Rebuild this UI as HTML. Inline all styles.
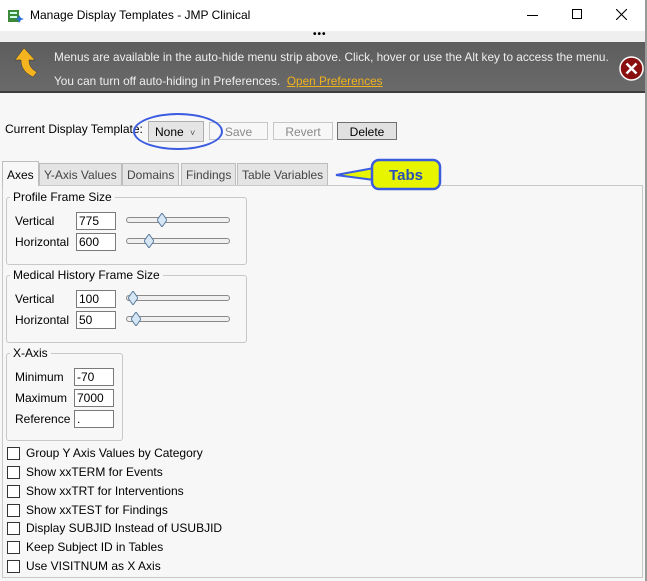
<!DOCTYPE html>
<html><head><style>
*{margin:0;padding:0;box-sizing:border-box}
body{width:647px;height:581px;overflow:hidden;background:#f7f7f7;font-family:"Liberation Sans",sans-serif;font-size:12px;color:#000;position:relative}
.a{position:absolute;white-space:nowrap}
.inp{position:absolute;background:#fff;border:1px solid #7a7a7a;height:18px;font-size:12px;padding:1px 2px}
fieldset{position:absolute;border:1px solid #c8c8c8;border-radius:3px}
.lg{position:absolute;background:#f7f7f7;padding:0 3px;font-size:12px}
.sl{position:absolute;height:6px;border:1px solid #8a8a8a;border-radius:3px;background:#f0f0f0;width:104px}
.th{position:absolute;width:10px;height:14px;top:-5px}
.cb{position:absolute;left:7px;width:13px;height:13px;border:1px solid #333;background:#fff}
.cl{position:absolute;left:26px}
.tab{position:absolute;top:163px;height:22px;border:1px solid #bdbdbd;border-bottom:none;background:#e4e4e4;color:#444;padding:4px 4px 0;font-size:12px}
.btn{position:absolute;top:122px;height:18px;border:1px solid #c6c6c6;background:#f7f7f7;color:#888;text-align:center;padding-top:2px}
</style></head><body>
<div class="a" style="left:0;top:0;width:647px;height:31px;background:#fff"></div>
<svg class="a" style="left:7px;top:7px" width="17" height="17"><rect x="1" y="3" width="11" height="12" fill="#3a8a3a"/><rect x="3" y="5" width="7" height="2" fill="#cfe"/><rect x="3" y="9" width="7" height="2" fill="#cfe"/><path d="M12 8l2 3 3 1-3 1-2 3-1-3-3-1 3-1z" fill="#2a6fd0"/></svg>
<div class="a" style="left:30px;top:8px;font-size:12px">Manage Display Templates - JMP Clinical</div>
<div class="a" style="left:527px;top:15px;width:11px;height:1px;background:#000"></div>
<div class="a" style="left:572px;top:9px;width:10px;height:10px;border:1px solid #000"></div>
<svg class="a" style="left:616px;top:9px" width="11" height="11"><path d="M0 0L11 11M11 0L0 11" stroke="#000" stroke-width="1.1"/></svg>
<div class="a" style="left:0;top:31px;width:647px;height:11px;background:#efefef"></div>
<div class="a" style="left:313px;top:29px;font-size:10px;letter-spacing:1px;font-weight:bold">&bull;&bull;&bull;</div>
<div class="a" style="left:0;top:42px;width:647px;height:51px;background:linear-gradient(#5d5d5d,#6a6a6a);border-bottom:2px solid #3d3d3d"></div>
<svg class="a" style="left:12px;top:46px" width="28" height="34"><path d="M12 2L3 14h6c0 8 4 13 12 17l4-5c-6-3-8-7-8-12h6z" fill="#f3b41f" stroke="#333" stroke-width=".5"/></svg>
<div class="a" style="left:54px;top:50px;color:#eee;font-size:11.8px">Menus are available in the auto-hide menu strip above. Click, hover or use the Alt key to access the menu.</div>
<div class="a" style="left:54px;top:74px;color:#eee;font-size:11.8px">You can turn off auto-hiding in Preferences. &nbsp;<span style="color:#f2b31a;text-decoration:underline">Open Preferences</span></div>
<svg class="a" style="left:619px;top:56px" width="25" height="25"><circle cx="12.5" cy="12.5" r="11.5" fill="#8a0f0f" stroke="#fff" stroke-width="1.5"/><path d="M7.5 7.5L17.5 17.5M17.5 7.5L7.5 17.5" stroke="#fff" stroke-width="2.5"/></svg>
<div class="a" style="left:645px;top:0;width:2px;height:581px;background:#9a9a9a"></div>

<div class="a" style="left:5px;top:122px">Current Display Template:</div>
<div class="a" style="left:148px;top:121px;width:56px;height:21px;border:1px solid #adadad;background:#e5e5e5;padding:3px 0 0 6px">None <span style="font-size:9px;color:#555;margin-left:3px">&#709;</span></div>
<div class="btn" style="left:209px;width:59px">Save</div>
<div class="btn" style="left:273px;width:60px">Revert</div>
<div class="btn" style="left:337px;width:60px;border-color:#707070;background:#e1e1e1;color:#000">Delete</div>
<div class="a" style="left:133px;top:113px;width:90px;height:37px;border:2.5px solid #3b5ce0;border-radius:50%"></div>

<div class="a" style="left:2px;top:185px;width:641px;height:393px;border:1px solid #c8c8c8;background:#f7f7f7"></div>
<div class="tab" style="left:2px;top:161px;height:25px;background:#f7f7f7;color:#000;padding-top:6px">Axes</div>
<div class="tab" style="left:39px">Y-Axis Values</div>
<div class="tab" style="left:122px">Domains</div>
<div class="tab" style="left:181px">Findings</div>
<div class="tab" style="left:237px">Table Variables</div>
<svg class="a" style="left:334px;top:158px" width="110" height="34"><path d="M40 10L2 17 40 22" fill="#e8f500" stroke="#3b5ce0" stroke-width="2"/><rect x="38" y="2" width="68" height="29" rx="7" fill="#e8f500" stroke="#3b5ce0" stroke-width="2.5"/><text x="72" y="22" text-anchor="middle" font-family="Liberation Sans" font-weight="bold" font-size="15" fill="#2a4fb8">Tabs</text></svg>

<fieldset style="left:6px;top:197px;width:241px;height:68px"></fieldset><div class="lg" style="left:10px;top:190px">Profile Frame Size</div>
<div class="a" style="left:15px;top:214px">Vertical</div><div class="inp" style="left:76px;top:212px;width:40px">775</div>
<div class="sl" style="left:126px;top:217px"><svg class="th" style="left:30px" width="10" height="14"><path d="M5 0L10 7 5 14 0 7z" fill="#d6e6f5" stroke="#5a7a9a"/></svg></div>
<div class="a" style="left:15px;top:235px">Horizontal</div><div class="inp" style="left:76px;top:233px;width:40px">600</div>
<div class="sl" style="left:126px;top:238px"><svg class="th" style="left:17px" width="10" height="14"><path d="M5 0L10 7 5 14 0 7z" fill="#d6e6f5" stroke="#5a7a9a"/></svg></div>

<fieldset style="left:6px;top:275px;width:241px;height:68px"></fieldset><div class="lg" style="left:10px;top:268px">Medical History Frame Size</div>
<div class="a" style="left:15px;top:292px">Vertical</div><div class="inp" style="left:76px;top:290px;width:40px">100</div>
<div class="sl" style="left:126px;top:295px"><svg class="th" style="left:1px" width="10" height="14"><path d="M5 0L10 7 5 14 0 7z" fill="#d6e6f5" stroke="#5a7a9a"/></svg></div>
<div class="a" style="left:15px;top:313px">Horizontal</div><div class="inp" style="left:76px;top:311px;width:40px">50</div>
<div class="sl" style="left:126px;top:316px"><svg class="th" style="left:4px" width="10" height="14"><path d="M5 0L10 7 5 14 0 7z" fill="#d6e6f5" stroke="#5a7a9a"/></svg></div>

<fieldset style="left:6px;top:353px;width:117px;height:88px"></fieldset><div class="lg" style="left:10px;top:346px">X-Axis</div>
<div class="a" style="left:15px;top:370px">Minimum</div><div class="inp" style="left:74px;top:368px;width:40px">-70</div>
<div class="a" style="left:15px;top:391px">Maximum</div><div class="inp" style="left:74px;top:389px;width:40px">7000</div>
<div class="a" style="left:15px;top:412px">Reference</div><div class="inp" style="left:74px;top:410px;width:40px">.</div>

<div class="cb" style="top:447px"></div><div class="a cl" style="top:446px">Group Y Axis Values by Category</div>
<div class="cb" style="top:466px"></div><div class="a cl" style="top:465px">Show xxTERM for Events</div>
<div class="cb" style="top:485px"></div><div class="a cl" style="top:484px">Show xxTRT for Interventions</div>
<div class="cb" style="top:504px"></div><div class="a cl" style="top:503px">Show xxTEST for Findings</div>
<div class="cb" style="top:522px"></div><div class="a cl" style="top:521px">Display SUBJID Instead of USUBJID</div>
<div class="cb" style="top:541px"></div><div class="a cl" style="top:540px">Keep Subject ID in Tables</div>
<div class="cb" style="top:560px"></div><div class="a cl" style="top:559px">Use VISITNUM as X Axis</div>
</body></html>
